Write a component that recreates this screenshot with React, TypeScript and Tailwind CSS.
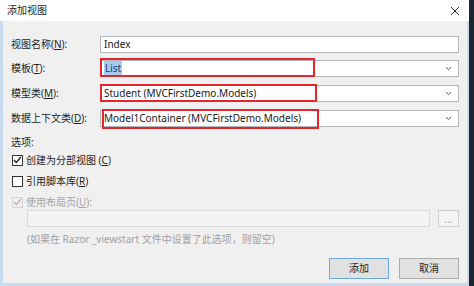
import React from 'react';

const font = "font-['Noto_Sans','Noto_Sans_CJK_SC',sans-serif]";

function Chevron() {
  return (
    <svg width="7" height="5" viewBox="0 0 7 5" className="shrink-0">
      <path d="M1 1.2l2.5 2.4L6 1.2" fill="none" stroke="#555" strokeWidth="1" />
    </svg>
  );
}

function Label({ text, k, colon = true }: { text: string; k: string; colon?: boolean }) {
  return (
    <span className="whitespace-nowrap">
      {text}(<span className="underline underline-offset-1">{k}</span>){colon ? ':' : ''}
    </span>
  );
}

function Field({
  children,
  select,
  red,
}: {
  children: React.ReactNode;
  select?: boolean;
  red?: string;
}) {
  return (
    <div className="relative h-[17px] flex-1">
      <div className="flex h-full items-center justify-between border border-[#b4b6bb] bg-white pl-[3px] pr-[6px]">
        <div className="whitespace-nowrap leading-[15px] text-[#1a1a1a]">{children}</div>
        {select && <Chevron />}
      </div>
      {red && <div className={`pointer-events-none absolute border-2 border-[#e3262e] ${red}`} />}
    </div>
  );
}

function Check({ checked, disabled }: { checked?: boolean; disabled?: boolean }) {
  return (
    <div
      className={`ml-[1px] flex h-[11px] w-[11px] shrink-0 items-center justify-center border ${
        disabled ? 'border-[#d6d6d6] bg-[#f0f0f0]' : 'border-[#333] bg-white'
      }`}
    >
      {checked && (
        <svg width="9" height="8" viewBox="0 0 9 8">
          <path
            d="M1 4l2.3 2.4L8 1"
            fill="none"
            stroke={disabled ? '#b5b5b5' : '#222'}
            strokeWidth="1.4"
          />
        </svg>
      )}
    </div>
  );
}

export default function App() {
  return (
    <div className={`flex h-[286px] w-[474px] bg-[#1c2631] text-[10px] ${font}`}>
      <div className="flex h-full w-[469px] flex-col">
        <div className="flex h-[21px] items-center justify-between bg-white pl-[7px] pr-[9px]">
          <span className="text-[#1e1e1e]">添加视图</span>
          <svg width="10" height="10" viewBox="0 0 10 10">
            <path d="M1 1l8 8M9 1l-8 8" stroke="#333" strokeWidth="1" />
          </svg>
        </div>

        <div className="flex flex-1 flex-col border-b-[3px] border-l-[3px] border-r-[2px] border-[#c9dbef] bg-[#f0f0f0] pl-[8px] pr-[8px] pt-[15px] text-[#1e1e1e]">
          <div className="flex items-center">
            <div className="w-[89px]">
              <Label text="视图名称" k="N" />
            </div>
            <Field>Index</Field>
          </div>
          <div className="mt-[7px] flex items-center">
            <div className="w-[89px]">
              <Label text="模板" k="T" />
            </div>
            <Field select red="-top-[2px] bottom-0 left-0 w-[215px]">
              <span className="bg-[#a3cbf0] px-[1px] text-[#1d3b63]">List</span>
            </Field>
          </div>
          <div className="mt-[8px] flex items-center">
            <div className="w-[89px]">
              <Label text="模型类" k="M" />
            </div>
            <Field select red="-top-[1px] bottom-0 left-0 w-[217px]">
              Student (MVCFirstDemo.Models)
            </Field>
          </div>
          <div className="mt-[8px] flex items-center">
            <div className="w-[89px]">
              <Label text="数据上下文类" k="D" />
            </div>
            <Field select red="-top-[1px] -bottom-[2px] left-[2px] w-[217px]">
              Model1Container (MVCFirstDemo.Models)
            </Field>
          </div>

          <div className="mt-[8px] h-[14px] leading-[14px]">选项:</div>

          <div className="mt-[4px] flex h-[14px] items-center gap-[3px]">
            <Check checked />
            <span>
              创建为分部视图 (<span className="underline underline-offset-1">C</span>)
            </span>
          </div>
          <div className="mt-[7px] flex h-[14px] items-center gap-[3px]">
            <Check />
            <Label text="引用脚本库" k="R" colon={false} />
          </div>
          <div className="mt-[7px] flex h-[14px] items-center gap-[3px] text-[#a5a5a5]">
            <Check checked disabled />
            <Label text="使用布局页" k="U" />
          </div>

          <div className="ml-[16px] mt-[1px] flex h-[17px] gap-[8px]">
            <div className="flex-1 border border-[#dadada] bg-[#f4f4f4]" />
            <div className="flex w-[21px] items-center justify-center border border-[#d0d0d0] bg-[#f4f4f4] leading-[12px] text-[#9a9a9a]">
              ...
            </div>
          </div>

          <div className="ml-[16px] mt-[5px] h-[14px] leading-[14px] text-[#a0a0a0]">
            (如果在 Razor _viewstart 文件中设置了此选项，则留空)
          </div>

          <div className="mt-[12px] flex justify-end gap-[10px]">
            <button className="flex h-[21px] w-[60px] items-center justify-center border border-[#6ea6de] bg-[#e1e1e1] text-[#1e1e1e]">
              添加
            </button>
            <button className="flex h-[21px] w-[60px] items-center justify-center border border-[#adadad] bg-[#e1e1e1] text-[#1e1e1e]">
              取消
            </button>
          </div>
        </div>
      </div>
    </div>
  );
}
